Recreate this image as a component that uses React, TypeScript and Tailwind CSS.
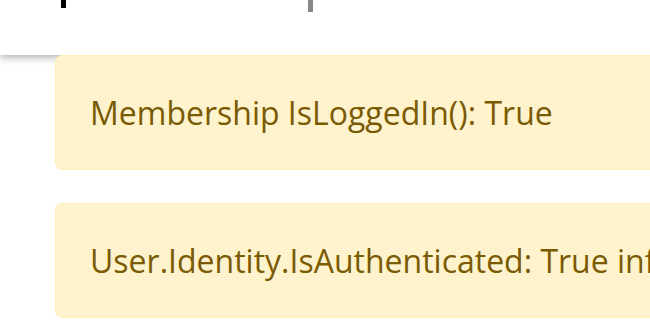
export default function App() {
  const rows = [
    "Membership IsLoggedIn(): True",
    "User.Identity.IsAuthenticated: True info",
  ];
  return (
    <div
      className="w-[650px] h-[333px] overflow-hidden bg-white"
      style={{ fontFamily: '"Open Sans", sans-serif' }}
    >
      <header className="relative z-[1] h-[55px] bg-white shadow-[0_3px_7px_rgba(0,0,0,0.28)] flex items-start">
        <div className="ml-[61px] w-[5px] h-[8px] bg-black" />
        <div className="ml-[242px] w-[5px] h-[12px] bg-[#888888]" />
      </header>
      <main className="relative z-[2] pl-[55px] flex flex-col gap-[33px]">
        {rows.map((text) => (
          <div
            key={text}
            className="w-[700px] h-[115px] shrink-0 flex items-center pl-[34px] bg-[#fff3cd] border border-[#ffeeba] rounded-[7px] text-[#7a5a03] text-[32px] whitespace-nowrap"
          >
            {text}
          </div>
        ))}
      </main>
    </div>
  );
}
